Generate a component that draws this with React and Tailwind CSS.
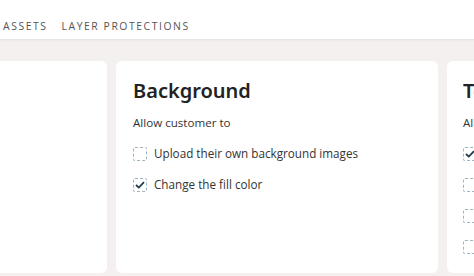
import React from "react";

function Box({ checked }) {
  return (
    <span className="w-[14px] h-[14px] border border-dashed border-[#9fb4bd] rounded-[2px] flex items-center justify-center shrink-0">
      {checked && (
        <svg width="10" height="8" viewBox="0 0 10 8" fill="none">
          <path d="M1 4 L3.8 6.6 L9 1.2" stroke="#1f3e4d" strokeWidth="1.8" />
        </svg>
      )}
    </span>
  );
}

function Row({ checked, label }) {
  return (
    <div className="flex items-center gap-[7px] h-[18px]">
      <Box checked={checked} />
      <span className="text-[11.7px] text-[#333] whitespace-nowrap">{label}</span>
    </div>
  );
}

export default function App() {
  return (
    <div className="w-[474px] h-[276px] overflow-hidden bg-[#f3f0ef] relative" style={{ fontFamily: '"Open Sans", sans-serif' }}>
      <div className="h-[40px] bg-white border-b border-[#e8e4e3] shadow-[0_1px_2px_rgba(0,0,0,0.04)] flex items-end pb-[4px] gap-[14px] pl-[3px] text-[10.4px] tracking-[0.15em] text-[#555]">
        <span>ASSETS</span>
        <span>LAYER PROTECTIONS</span>
      </div>
      <div className="flex gap-[9px] mt-[21px] ml-[-20px]">
        <div className="w-[127px] h-[212px] bg-white rounded-[6px] shrink-0" />
        <div className="w-[322px] h-[212px] bg-white rounded-[6px] shrink-0 pl-[17px] pt-[17px]">
          <div className="text-[20px] font-semibold text-[#222] leading-[26px]" style={{ fontFamily: '"Noto Sans", sans-serif' }}>Background</div>
          <div className="text-[11.6px] text-[#333] mt-[10px] leading-[18px]">Allow customer to</div>
          <div className="mt-[13px] flex flex-col gap-[13px]">
            <Row checked={false} label="Upload their own background images" />
            <Row checked={true} label="Change the fill color" />
          </div>
        </div>
        <div className="w-[200px] h-[212px] bg-white rounded-[6px] shrink-0 pl-[16px] pt-[17px] overflow-hidden">
          <div className="text-[20px] font-semibold text-[#222] leading-[26px]" style={{ fontFamily: '"Noto Sans", sans-serif' }}>Text</div>
          <div className="text-[11.6px] text-[#333] mt-[10px] leading-[18px]">Allow customer to</div>
          <div className="mt-[13px] flex flex-col gap-[13px]">
            <Row checked={true} label="Edit text" />
            <Row checked={false} label="Change font" />
            <Row checked={false} label="Change color" />
            <Row checked={false} label="Change size" />
          </div>
        </div>
      </div>
    </div>
  );
}
